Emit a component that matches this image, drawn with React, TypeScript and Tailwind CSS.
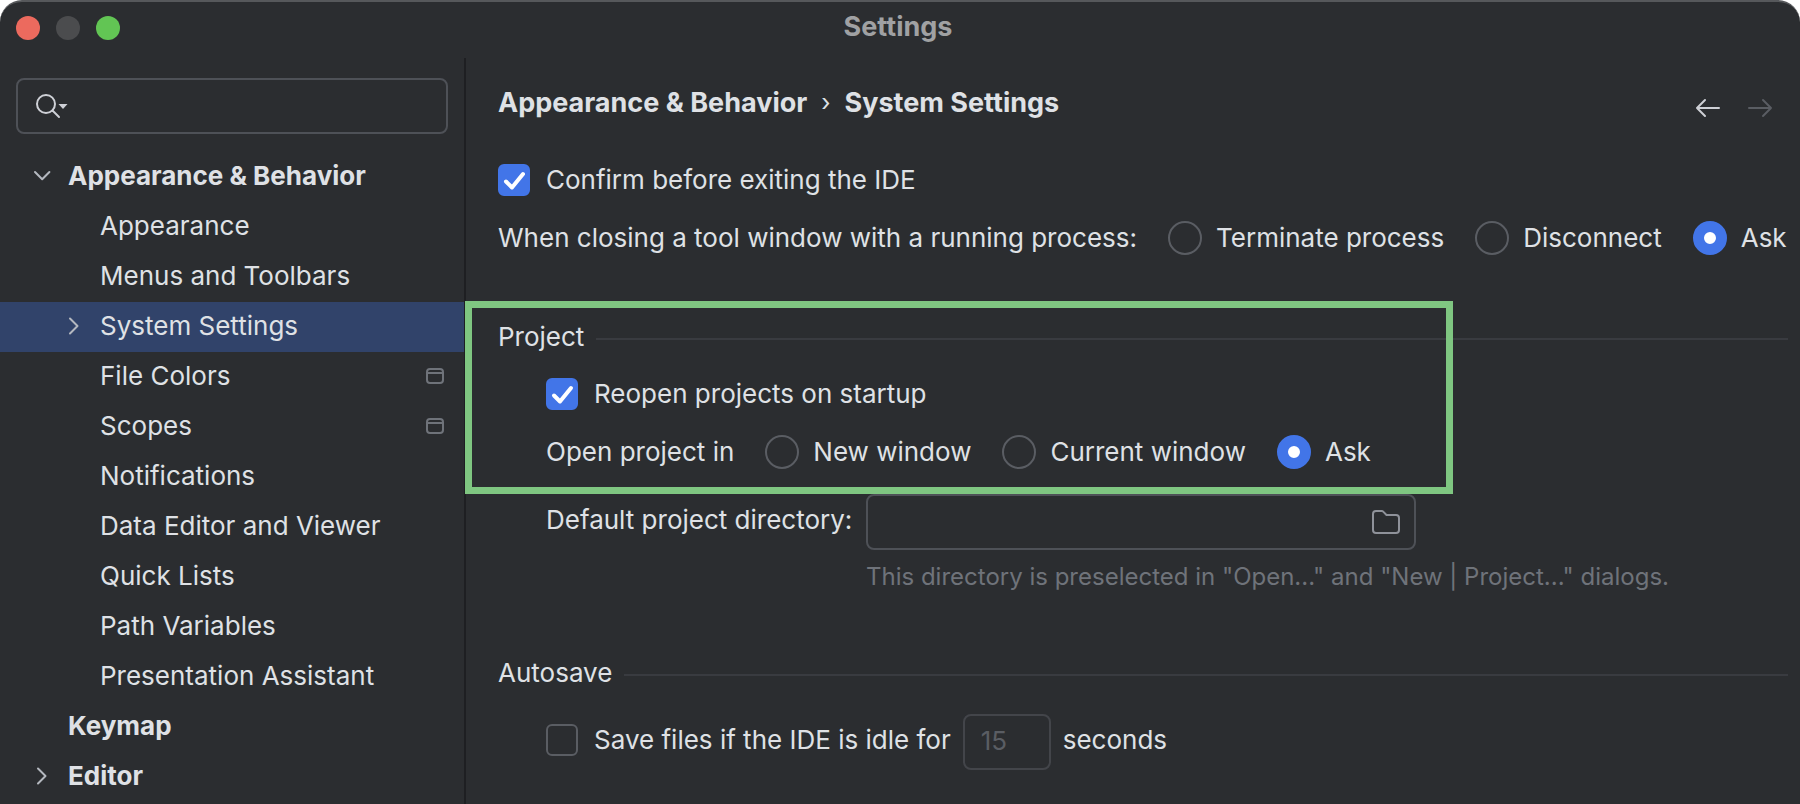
import { useState } from "react";
import type { ReactNode } from "react";
import { clsx } from "clsx";

type TreeItem = {
  label: string;
  level: 0 | 1;
  arrow?: "down" | "right";
  projectLevel?: boolean;
};

const treeItems: TreeItem[] = [
  { label: "Appearance & Behavior", level: 0, arrow: "down" },
  { label: "Appearance", level: 1 },
  { label: "Menus and Toolbars", level: 1 },
  { label: "System Settings", level: 1, arrow: "right" },
  { label: "File Colors", level: 1, projectLevel: true },
  { label: "Scopes", level: 1, projectLevel: true },
  { label: "Notifications", level: 1 },
  { label: "Data Editor and Viewer", level: 1 },
  { label: "Quick Lists", level: 1 },
  { label: "Path Variables", level: 1 },
  { label: "Presentation Assistant", level: 1 },
  { label: "Keymap", level: 0 },
  { label: "Editor", level: 0, arrow: "right" },
];

function Chevron({ direction }: { direction: "down" | "right" }) {
  return (
    <svg className="size-8" viewBox="0 0 32 32" fill="none" stroke="#b4b8bf" strokeWidth="2" strokeLinecap="round" strokeLinejoin="round">
      <path d={direction === "down" ? "M9 12l7.200 7.200L23.400 12" : "M12 8.500l7.500 7.500-7.500 7.500"} />
    </svg>
  );
}

function SearchIcon() {
  return (
    <svg className="h-8 w-9 shrink-0" viewBox="0 0 36 32" fill="none" stroke="#ced0d6" strokeWidth="2" strokeLinecap="round">
      <circle cx="12" cy="14" r="9" />
      <path d="M18.500 20.500l6.500 6.500" />
      <path d="M24.500 14h9l-4.500 5z" fill="#ced0d6" stroke="none" />
    </svg>
  );
}

function WindowIcon() {
  return (
    <svg className="h-4 w-[18px]" viewBox="0 0 18 16" fill="none" stroke="#6f737a" strokeWidth="2">
      <rect x="1" y="1" width="16" height="14" rx="3" />
      <path d="M1 5h16" />
    </svg>
  );
}

function FolderIcon() {
  return (
    <svg className="h-6 w-7" viewBox="0 0 28 24" fill="none" stroke="#8f929a" strokeWidth="2" strokeLinejoin="round">
      <path d="M1 4a3 3 0 0 1 3-3h5.800a2 2 0 0 1 1.400.600L14.500 5H24a3 3 0 0 1 3 3v12a3 3 0 0 1-3 3H4a3 3 0 0 1-3-3z" />
    </svg>
  );
}

function ArrowIcon({ flip }: { flip?: boolean }) {
  return (
    <svg className={clsx("size-8", flip && "-scale-x-100")} viewBox="0 0 32 32" fill="none" stroke="currentColor" strokeWidth="2" strokeLinecap="round" strokeLinejoin="round">
      <path d="M27 16H5M13 8l-8 8 8 8" />
    </svg>
  );
}

function Checkbox({ label, defaultChecked }: { label: string; defaultChecked?: boolean }) {
  return (
    <label className="flex h-8 items-center gap-4">
      <span className="grid size-8 shrink-0">
        <input
          type="checkbox"
          defaultChecked={defaultChecked}
          className="peer col-start-1 row-start-1 size-8 appearance-none rounded-md border-2 border-[#5a5d63] checked:border-[#4275e8] checked:bg-[#4275e8]"
        />
        <svg
          className="pointer-events-none invisible col-start-1 row-start-1 size-8 peer-checked:visible"
          viewBox="0 0 32 32"
          fill="none"
          stroke="#fff"
          strokeWidth="4"
          strokeLinecap="round"
          strokeLinejoin="round"
        >
          <path d="M8 17.500l6 6L25 10" />
        </svg>
      </span>
      <span>{label}</span>
    </label>
  );
}

type RadioGroupProps = {
  title: string;
  name: string;
  options: string[];
};

function RadioGroup({ title, name, options }: RadioGroupProps) {
  const [value, setValue] = useState("Ask");

  return (
    <div role="radiogroup" aria-label={title} className="mt-6 flex h-9 items-center gap-[31px] whitespace-nowrap">
      <span>{title}</span>
      {options.map((option) => (
        <label key={option} className="flex items-center gap-3.5">
          <input
            type="radio"
            name={name}
            checked={value === option}
            onChange={() => setValue(option)}
            className="size-[34px] shrink-0 appearance-none rounded-full border-2 border-[#5a5d63] checked:border-[11px] checked:border-[#4275e8] checked:bg-white"
          />
          <span>{option}</span>
        </label>
      ))}
    </div>
  );
}

function SectionTitle({ children }: { children: ReactNode }) {
  return (
    <div className="flex h-8 items-center gap-3">
      <h2>{children}</h2>
      <div className="mt-1 h-0.5 flex-1 bg-[#393b40]" />
    </div>
  );
}

function Sidebar() {
  const [selected, setSelected] = useState("System Settings");

  return (
    <aside className="w-[466px] shrink-0 border-r-2 border-[#1e1f22] pt-5">
      <div className="mr-4 ml-4 flex h-14 items-center rounded-lg border-2 border-[#4e5157] pl-4">
        <SearchIcon />
        <input type="text" aria-label="Search settings" className="h-full min-w-0 flex-1 bg-transparent px-2 outline-none" />
      </div>
      <nav className="mt-[18px]">
        {treeItems.map((item) => (
          <a
            key={item.label}
            href="#"
            onClick={() => setSelected(item.label)}
            className={clsx(
              "flex h-[50px] items-center pr-5 pb-0.5",
              item.level === 0 ? "pl-[26px] font-bold" : "pl-[58px]",
              selected === item.label && "bg-[#31436a]"
            )}
          >
            <span className="w-[42px] shrink-0">{item.arrow && <Chevron direction={item.arrow} />}</span>
            <span className="flex-1">{item.label}</span>
            {item.projectLevel && <WindowIcon />}
          </a>
        ))}
      </nav>
    </aside>
  );
}

function SettingsPanel() {
  return (
    <main className="min-w-0 flex-1 pt-6 pr-3 pb-6 pl-8">
      <div className="flex h-[42px] justify-between">
        <div className="flex items-center gap-3.5 text-[27px] font-bold">
          <a href="#">Appearance &amp; Behavior</a>
          <span className="text-2xl/8 font-normal">›</span>
          <span>System Settings</span>
        </div>
        <div className="flex items-end gap-5 pr-3">
          <button type="button" aria-label="Back" className="text-[#ced0d6]">
            <ArrowIcon />
          </button>
          <button type="button" aria-label="Forward" disabled className="text-[#5a5d63]">
            <ArrowIcon flip />
          </button>
        </div>
      </div>

      <div className="mt-10">
        <Checkbox label="Confirm before exiting the IDE" defaultChecked />
        <RadioGroup
          title="When closing a tool window with a running process:"
          name="closing"
          options={["Terminate process", "Disconnect", "Ask"]}
        />
      </div>

      {/* Project */}
      <section className="relative mt-[65px]">
        <SectionTitle>Project</SectionTitle>
        <div className="mt-[25px] pl-12">
          <Checkbox label="Reopen projects on startup" defaultChecked />
          <RadioGroup title="Open project in" name="open" options={["New window", "Current window", "Ask"]} />
        </div>
        <div className="pointer-events-none absolute -top-5 -bottom-6 -left-[33px] z-10 w-[988px] border-[7px] border-[#7fc681]" />
      </section>
      <div className="mt-6 grid grid-cols-[320px_1fr] pl-12">
        <label htmlFor="directory" className="flex h-14 items-center pb-1">
          Default project directory:
        </label>
        <div>
          <div className="flex h-14 max-w-[550px] items-center rounded-lg border-2 border-[#4e5157] pr-3.5">
            <input id="directory" type="text" className="h-full min-w-0 flex-1 bg-transparent px-3 outline-none" />
            <button type="button" aria-label="Browse">
              <FolderIcon />
            </button>
          </div>
          <p className="mt-[11px] text-2xl/8 text-[#6f737a]">
            This directory is preselected in "Open..." and "New | Project..." dialogs.
          </p>
        </div>
      </div>

      {/* Autosave */}
      <section className="mt-16">
        <SectionTitle>Autosave</SectionTitle>
        <div className="mt-[25px] flex items-center gap-3 pl-12">
          <div className="pb-1">
            <Checkbox label="Save files if the IDE is idle for" />
          </div>
          <input
            type="text"
            aria-label="Idle seconds"
            defaultValue="15"
            disabled
            className="h-14 w-[88px] rounded-lg border-2 border-[#43454a] bg-transparent px-4 pb-1 text-[#5a5d63]"
          />
          <span className="pb-1">seconds</span>
        </div>
      </section>
    </main>
  );
}

export default function App() {
  return (
    <div className="bg-white">
      <div className="flex min-h-screen flex-col overflow-hidden rounded-t-[22px] border-t-2 border-[#56585b] bg-[#2b2d30] font-['Inter',sans-serif] text-[26px]/8 text-[#dfe1e5]">
        <header className="grid h-14 grid-cols-[1fr_auto_1fr] items-start pr-5 pl-4">
          <div className="flex gap-4 pt-3.5">
            <button type="button" aria-label="Close" className="size-6 rounded-full bg-[#ec6a5e]" />
            <button type="button" aria-label="Minimize" className="size-6 rounded-full bg-[#4b4c4e]" />
            <button type="button" aria-label="Zoom" className="size-6 rounded-full bg-[#62c554]" />
          </div>
          <h1 className="pt-[9px] text-[27px] font-bold text-[#a0a1a3]">Settings</h1>
        </header>
        <div className="flex flex-1">
          <Sidebar />
          <SettingsPanel />
        </div>
      </div>
    </div>
  );
}
